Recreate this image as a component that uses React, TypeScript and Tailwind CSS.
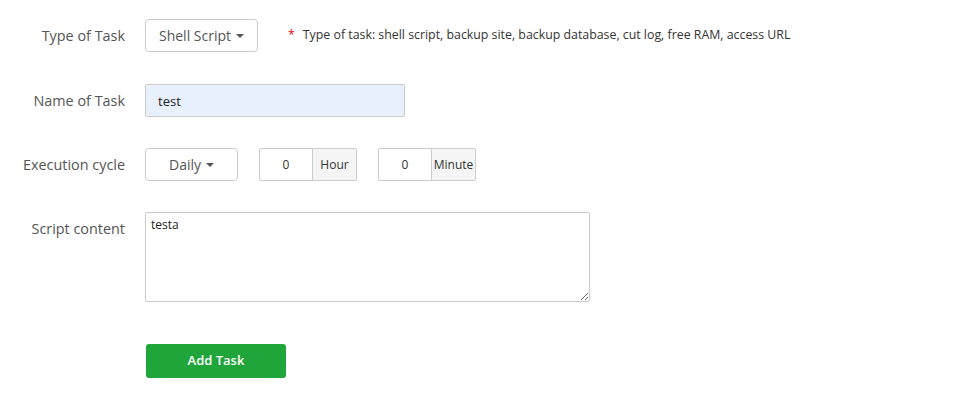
const font = { fontFamily: '"Open Sans", "Noto Sans", sans-serif' };

const Caret = () => (
  <span className="ml-[5px] inline-block h-0 w-0 border-x-[4px] border-t-[4px] border-x-transparent border-t-[#555] align-middle" />
);

interface RowProps {
  label: string;
  children: React.ReactNode;
  className?: string;
}

const Row: React.FC<RowProps> = ({ label, children, className = "" }) => (
  <div className={`flex items-start ${className}`}>
    <label className="w-[125px] shrink-0 text-right text-[14.4px] leading-[33px] text-[#555]">
      {label}
    </label>
    <div className="ml-[20px] flex items-center">{children}</div>
  </div>
);

interface UnitInputProps {
  value: string;
  unit: string;
}

const UnitInput: React.FC<UnitInputProps> = ({ value, unit }) => (
  <div className="flex h-[33px] border border-[#ccc] rounded-[2px] overflow-hidden">
    <input
      defaultValue={value}
      className="w-[52px] shrink-0 text-center text-[12px] text-[#333] outline-none"
    />
    <span className="w-[44px] shrink-0 flex items-center justify-center border-l border-[#ccc] bg-[#f5f5f5] text-[12px] text-[#333] whitespace-nowrap">
      {unit}
    </span>
  </div>
);

export default function App() {
  return (
    <div className="h-[409px] w-[972px] bg-white pt-[19px]" style={font}>
      <Row label="Type of Task">
        <button className="flex h-[33px] w-[113px] items-center justify-center rounded-[4px] border border-[#ccc] bg-white text-[14px] text-[#555]">
          Shell Script
          <Caret />
        </button>
        <span className="ml-[30px] text-[12.35px] text-[#333]">
          <span className="mr-[8px] text-[#ef0808]">*</span>
          Type of task: shell script, backup site, backup database, cut log, free RAM, access URL
        </span>
      </Row>

      <Row label="Name of Task" className="mt-[32px]">
        <input
          defaultValue="test"
          className="h-[33px] w-[260px] rounded-[2px] border border-[#ccc] bg-[#e8f0fe] px-[12px] text-[13px] text-[#222] outline-none"
        />
      </Row>

      <Row label="Execution cycle" className="mt-[31px]">
        <button className="flex h-[33px] w-[93px] items-center justify-center rounded-[4px] border border-[#ccc] bg-white text-[14px] text-[#555]">
          Daily
          <Caret />
        </button>
        <div className="ml-[21px]">
          <UnitInput value="0" unit="Hour" />
        </div>
        <div className="ml-[21px]">
          <UnitInput value="0" unit="Minute" />
        </div>
      </Row>

      <Row label="Script content" className="mt-[31px]">
        <textarea
          defaultValue="testa"
          className="h-[90px] w-[445px] rounded-[2px] border border-[#ccc] px-[5px] py-[3px] text-[12px] text-[#222] outline-none"
        />
      </Row>

      <div className="mt-[42px] pl-[146px]">
        <button className="h-[34px] w-[140px] rounded-[3px] bg-[#20a53a] text-[13px] font-semibold text-white">
          Add Task
        </button>
      </div>
    </div>
  );
}
